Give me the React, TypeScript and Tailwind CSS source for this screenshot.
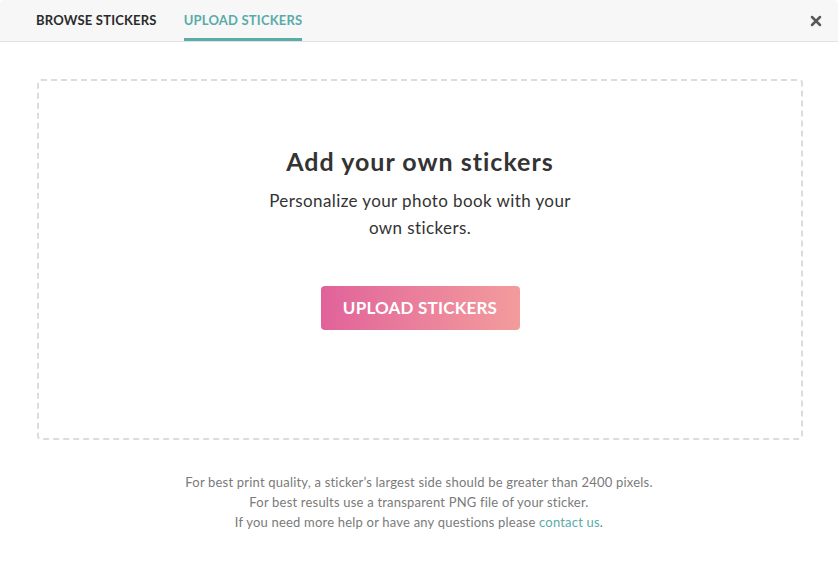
import { X } from 'lucide-react';

export default function App() {
  return (
    <div
      className="w-[838px] h-[569px] bg-white flex flex-col overflow-hidden"
      style={{ fontFamily: 'Lato, "Open Sans", sans-serif' }}
    >
      {/* Tabs header */}
      <div className="h-[42px] shrink-0 bg-[#f7f7f7] border-b border-[#e2e2e2] flex items-stretch pl-[36px] pr-[14px] rounded-t-[4px]">
        <button type="button" className="text-[13px] font-bold text-[#2b2b2b] tracking-[0.2px] mr-[27px] pt-[1px]">
          BROWSE STICKERS
        </button>
        <button
          type="button"
          className="text-[13px] font-bold text-[#5aaba9] tracking-[0.2px] border-b-[3px] border-[#5aaba9] pt-[4px]"
        >
          UPLOAD STICKERS
        </button>
        <div className="flex-1" />
        <button type="button" className="self-center text-[#5a5a5a]" aria-label="Close">
          <X className="w-[16px] h-[16px]" strokeWidth={3.75} />
        </button>
      </div>

      {/* Drop zone */}
      <div className="pl-[37px] pr-[35px] pt-[37px]">
        <div className="h-[361px] border-2 border-dashed border-[#dcdcdc] rounded-[4px] flex flex-col items-center pt-[64px]">
          <h2 className="text-[25px] font-bold text-[#333333] leading-[32px] tracking-[1px]">Add your own stickers</h2>
          <p className="mt-[10px] w-[330px] text-center text-[17px] leading-[27px] tracking-[0.4px] text-[#333333]">
            Personalize your photo book with your own stickers.
          </p>
          <button
            type="button"
            className="mt-[45px] w-[199px] h-[44px] rounded-[4px] bg-linear-to-r from-[#e1629a] to-[#f39c9c] text-white text-[17px] font-bold tracking-[0.2px]"
          >
            UPLOAD STICKERS
          </button>
        </div>
      </div>

      {/* Help text */}
      <div className="mt-[32px] text-center text-[13px] leading-[20px] tracking-[0.2px] text-[#7a7a7a]">
        <p>For best print quality, a sticker’s largest side should be greater than 2400 pixels.</p>
        <p>For best results use a transparent PNG file of your sticker.</p>
        <p>
          If you need more help or have any questions please{' '}
          <a href="#" className="text-[#5aaba9]">contact us</a>.
        </p>
      </div>
    </div>
  );
}
